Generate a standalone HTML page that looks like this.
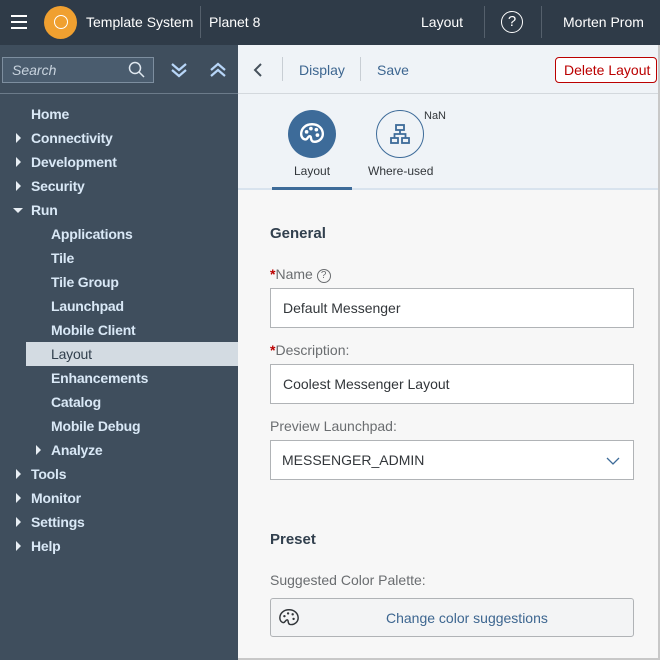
<!DOCTYPE html>
<html><head><meta charset="utf-8"><style>
*{margin:0;padding:0;box-sizing:border-box}
body{width:660px;height:660px;overflow:hidden;font-family:"Liberation Sans",sans-serif;background:#c8c8c8;position:relative}
.a{position:absolute}
.hdr{left:0;top:0;width:660px;height:45px;background:#2f3b48;color:#fff;font-size:14px}
.side{left:0;top:45px;width:238px;height:615px;background:#3f4e5d}
.main{left:238px;top:45px;width:420px;height:613px;background:#f7f7f7}
.nav{position:absolute;color:#d9e8f6;font-size:14px;font-weight:bold;letter-spacing:-0.2px}
.tri{position:absolute;width:0;height:0;border-left:5px solid #e8eef4;border-top:5px solid transparent;border-bottom:5px solid transparent}
.lbl{position:absolute;font-size:14px;color:#6a6d70}
.inp{position:absolute;left:32px;width:364px;height:40px;background:#fff;border:1px solid #b0b3b6;font-size:14px;color:#32363a;padding:11px 12px}
.star{color:#bb0000;font-weight:bold}
</style></head><body>
<div class="a hdr">
  <div class="a" style="left:11px;top:15px;width:16px;height:2px;background:#fff"></div>
  <div class="a" style="left:11px;top:21px;width:16px;height:2px;background:#fff"></div>
  <div class="a" style="left:11px;top:27px;width:16px;height:2px;background:#fff"></div>
  <div class="a" style="left:44px;top:6px;width:33px;height:33px;border-radius:50%;background:#f0a030"></div>
  <div class="a" style="left:54px;top:15px;width:14px;height:14px;border-radius:50%;border:1.5px solid #fff"></div>
  <div class="a" style="left:86px;top:14px">Template System</div>
  <div class="a" style="left:200px;top:6px;width:1px;height:32px;background:#55606c"></div>
  <div class="a" style="left:209px;top:14px">Planet 8</div>
  <div class="a" style="left:421px;top:14px">Layout</div>
  <div class="a" style="left:484px;top:6px;width:1px;height:32px;background:#55606c"></div>
  <div class="a" style="left:501px;top:11px;width:22px;height:22px;border-radius:50%;border:1.5px solid #fff;text-align:center;font-size:15px;line-height:19px">?</div>
  <div class="a" style="left:541px;top:6px;width:1px;height:32px;background:#55606c"></div>
  <div class="a" style="left:563px;top:14px">Morten Prom</div>
</div>
<div class="a side">
  <div class="a" style="left:2px;top:12px;width:152px;height:26px;background:#4a5c6e;border:1px solid #7d8e9f"></div>
  <div class="a" style="left:12px;top:17px;font-size:14px;font-style:italic;color:#c8d3de">Search</div>
  <svg class="a" style="left:128px;top:16px" width="18" height="18"><circle cx="7" cy="7" r="5.5" fill="none" stroke="#e0e8f0" stroke-width="1.5"/><line x1="11" y1="11" x2="16" y2="16" stroke="#e0e8f0" stroke-width="1.5"/></svg>
  <svg class="a" style="left:170px;top:16px" width="18" height="18"><path d="M2 3l7 6 7-6M2 9l7 6 7-6" fill="none" stroke="#b8d6f8" stroke-width="2.2"/></svg>
  <svg class="a" style="left:209px;top:16px" width="18" height="18"><path d="M2 9l7-6 7 6M2 15l7-6 7 6" fill="none" stroke="#b8d6f8" stroke-width="2.2"/></svg>
  <div class="a" style="left:0;top:48px;width:238px;height:1px;background:#6c7b8a"></div>
  <div class="a" style="left:26px;top:297px;width:212px;height:24px;background:#d3dbe2"></div>
</div>
<div class="nav" style="left:31px;top:106px">Home</div>
<div class="tri" style="left:16px;top:133px"></div><div class="nav" style="left:31px;top:130px">Connectivity</div>
<div class="tri" style="left:16px;top:157px"></div><div class="nav" style="left:31px;top:154px">Development</div>
<div class="tri" style="left:16px;top:181px"></div><div class="nav" style="left:31px;top:178px">Security</div>
<div class="a" style="left:13px;top:208px;border-top:5px solid #e8eef4;border-left:5px solid transparent;border-right:5px solid transparent"></div><div class="nav" style="left:31px;top:202px">Run</div>
<div class="nav" style="left:51px;top:226px">Applications</div>
<div class="nav" style="left:51px;top:250px">Tile</div>
<div class="nav" style="left:51px;top:274px">Tile Group</div>
<div class="nav" style="left:51px;top:298px">Launchpad</div>
<div class="nav" style="left:51px;top:322px">Mobile Client</div>
<div class="nav" style="left:51px;top:346px;color:#32404e;font-weight:normal">Layout</div>
<div class="nav" style="left:51px;top:370px">Enhancements</div>
<div class="nav" style="left:51px;top:394px">Catalog</div>
<div class="nav" style="left:51px;top:418px">Mobile Debug</div>
<div class="tri" style="left:36px;top:445px"></div><div class="nav" style="left:51px;top:442px">Analyze</div>
<div class="tri" style="left:16px;top:469px"></div><div class="nav" style="left:31px;top:466px">Tools</div>
<div class="tri" style="left:16px;top:493px"></div><div class="nav" style="left:31px;top:490px">Monitor</div>
<div class="tri" style="left:16px;top:517px"></div><div class="nav" style="left:31px;top:514px">Settings</div>
<div class="tri" style="left:16px;top:541px"></div><div class="nav" style="left:31px;top:538px">Help</div>

<div class="a main">
  <div class="a" style="left:0;top:0;width:420px;height:144px;background:#eff3f7"></div>
  <div class="a" style="left:0;top:48px;width:420px;height:1px;background:#d3d8dd"></div>
  <svg class="a" style="left:14px;top:17px" width="12" height="16"><path d="M9 2L3 8l6 6" fill="none" stroke="#46515c" stroke-width="2"/></svg>
  <div class="a" style="left:44px;top:12px;width:1px;height:24px;background:#c8ced4"></div>
  <div class="a" style="left:61px;top:17px;font-size:14px;color:#3d6690">Display</div>
  <div class="a" style="left:122px;top:12px;width:1px;height:24px;background:#c8ced4"></div>
  <div class="a" style="left:139px;top:17px;font-size:14px;color:#3d6690">Save</div>
  <div class="a" style="left:317px;top:12px;width:102px;height:26px;border:1px solid #bb0000;border-radius:4px;background:#fff;color:#bb0000;font-size:14px;padding:4px 0 0 8px">Delete Layout</div>
  <div class="a" style="left:50px;top:65px;width:48px;height:48px;border-radius:50%;background:#3d6b99"></div>
  <svg class="a" style="left:61px;top:76px" width="26" height="26" viewBox="0 0 24 24"><path d="M12 3C6 3 2 7 2 12c0 3 2 5 4 5 2 0 2-3 4-3 2 0 0 4 3 5 5 1 9-3 9-7 0-5-4-9-10-9z" fill="none" stroke="#fff" stroke-width="2.2"/><circle cx="7" cy="10" r="1.7" fill="#fff"/><circle cx="11" cy="7" r="1.7" fill="#fff"/><circle cx="16" cy="8" r="1.7" fill="#fff"/><circle cx="17" cy="13" r="1.7" fill="#fff"/></svg>
  <div class="a" style="left:56px;top:119px;font-size:12px;color:#32363a">Layout</div>
  <div class="a" style="left:138px;top:65px;width:48px;height:48px;border-radius:50%;border:1px solid #3d6b99;background:#eff3f7"></div>
  <svg class="a" style="left:150px;top:77px" width="24" height="24" viewBox="0 0 24 24"><rect x="8" y="3" width="8" height="5" fill="none" stroke="#3d6b99" stroke-width="1.8"/><rect x="3" y="16" width="7" height="5" fill="none" stroke="#3d6b99" stroke-width="1.8"/><rect x="14" y="16" width="7" height="5" fill="none" stroke="#3d6b99" stroke-width="1.8"/><path d="M12 8v4M6.5 16v-4h11v4" fill="none" stroke="#3d6b99" stroke-width="1.8"/></svg>
  <div class="a" style="left:186px;top:65px;font-size:11px;color:#32363a">NaN</div>
  <div class="a" style="left:130px;top:119px;font-size:12px;color:#32363a">Where-used</div>
  <div class="a" style="left:0;top:143px;width:420px;height:2px;background:#d8e3ee"></div>
  <div class="a" style="left:34px;top:142px;width:80px;height:3px;background:#3d6b99"></div>
  <div class="a" style="left:32px;top:180px;font-size:15px;font-weight:bold;color:#32404e">General</div>
  <div class="lbl" style="left:32px;top:221px"><span class="star">*</span>Name <span style="display:inline-block;width:14px;height:14px;border:1px solid #6a6d70;border-radius:50%;font-size:10px;text-align:center;line-height:12px;vertical-align:1px">?</span></div>
  <div class="inp" style="top:243px">Default Messenger</div>
  <div class="lbl" style="left:32px;top:297px"><span class="star">*</span>Description:</div>
  <div class="inp" style="top:319px">Coolest Messenger Layout</div>
  <div class="lbl" style="left:32px;top:373px">Preview Launchpad:</div>
  <div class="inp" style="top:395px;padding-left:11px">MESSENGER_ADMIN</div>
  <svg class="a" style="left:368px;top:411px" width="14" height="10"><path d="M1 2l6 6 6-6" fill="none" stroke="#3d6b99" stroke-width="1.3"/></svg>
  <div class="a" style="left:32px;top:486px;font-size:15px;font-weight:bold;color:#32404e">Preset</div>
  <div class="lbl" style="left:32px;top:527px">Suggested Color Palette:</div>
  <div class="a" style="left:32px;top:553px;width:364px;height:39px;border:1px solid #b0b3b6;border-radius:3px;background:#f3f4f5"></div>
  <svg class="a" style="left:40px;top:562px" width="22" height="22" viewBox="0 0 24 24"><path d="M12 3C6 3 2 7 2 12c0 3 2 5 4 5 2 0 2-3 4-3 2 0 0 4 3 5 5 1 9-3 9-7 0-5-4-9-10-9z" fill="none" stroke="#32363a" stroke-width="1.6"/><circle cx="7" cy="10" r="1.3" fill="#32363a"/><circle cx="11" cy="7" r="1.3" fill="#32363a"/><circle cx="16" cy="8" r="1.3" fill="#32363a"/><circle cx="17" cy="13" r="1.3" fill="#32363a"/></svg>
  <div class="a" style="left:148px;top:565px;font-size:14px;color:#3d6690">Change color suggestions</div>
</div>
</body></html>
